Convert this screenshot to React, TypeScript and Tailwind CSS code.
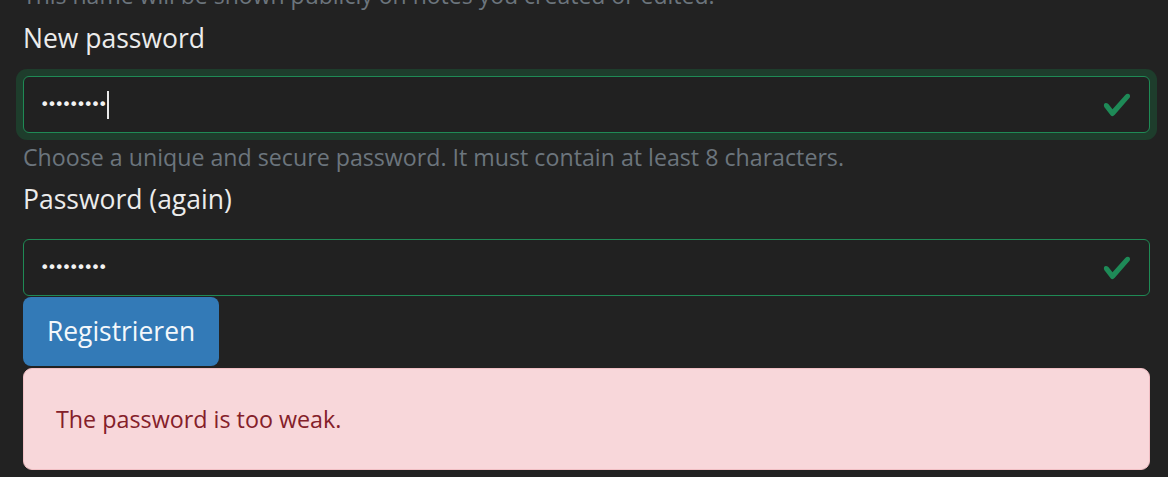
function ValidIcon() {
  return (
    <svg viewBox="0 0 8 8" className="h-[30px] w-[30px] shrink-0" aria-hidden>
      <path
        fill="#1e8a57"
        d="M2.3 6.73.6 4.53c-.4-1.04.46-1.4 1.1-.8l1.1 1.4 3.4-3.8c.6-.63 1.6-.27 1.2.7l-4 4.6c-.43.5-.8.4-1.1.1z"
      />
    </svg>
  );
}

function PasswordField({ focused }: { focused?: boolean }) {
  return (
    <div className={focused ? '-m-[7px] rounded-[11px] bg-[#1e3d2c] p-[7px]' : ''}>
      <div className="flex h-[57px] items-center justify-between rounded-[6px] border-[1.5px] border-[#1f8a55] bg-[#212121] pl-[16px] pr-[17px]">
        <div className="flex items-center text-[#f2f2f2]">
          <span className="font-['DejaVu_Sans',sans-serif] text-[16px] leading-none tracking-[-2.2px]">
            •••••••••
          </span>
          {focused && <span className="ml-[2px] h-[28px] w-[1.5px] bg-[#e8e8e8]" />}
        </div>
        <ValidIcon />
      </div>
    </div>
  );
}

export default function App() {
  return (
    <div className="h-[477px] w-[1168px] overflow-hidden bg-[#222222] font-['Open_Sans','Noto_Sans',sans-serif]">
      <div className="pl-[23px] pr-[18px]">
        <p className="-mt-[18px] text-[23px] leading-[27px] text-[#6c757d]">
          This name will be shown publicly on notes you created or edited.
        </p>
        <label className="mt-[12px] block text-[26.5px] leading-[34px] text-[#ececec]">
          New password
        </label>
        <div className="mt-[21px]">
          <PasswordField focused />
        </div>
        <p className="mt-[11px] text-[23.2px] leading-[27px] text-[#6c757d]">
          Choose a unique and secure password. It must contain at least 8 characters.
        </p>
        <label className="mt-[11px] block text-[26.5px] leading-[34px] text-[#ececec]">
          Password (again)
        </label>
        <div className="mt-[23px]">
          <PasswordField />
        </div>
        <button className="mt-[1px] flex h-[69px] items-center rounded-[8px] bg-[#337ab7] px-[24px] text-[26.4px] text-[#f4f8fb]">
          Registrieren
        </button>
        <div className="mt-[2px] flex h-[102px] items-center rounded-[9px] border border-[#f1bfc4] bg-[#f8d7da] px-[32px] text-[23.3px] text-[#842029]">
          The password is too weak.
        </div>
      </div>
    </div>
  );
}
